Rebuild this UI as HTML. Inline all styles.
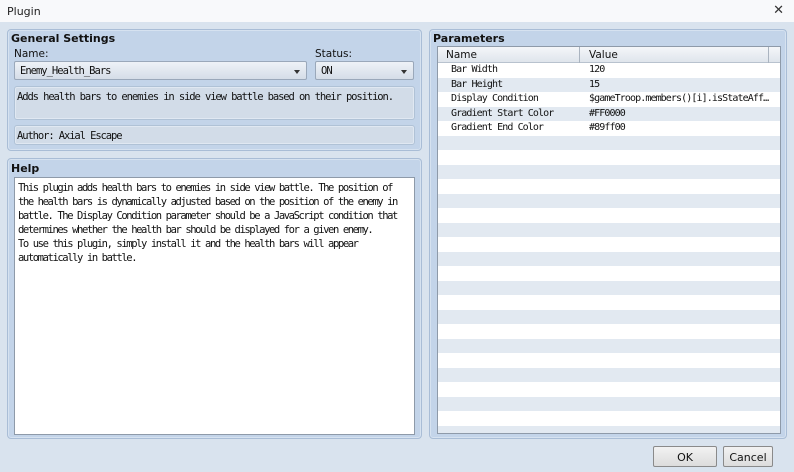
<!DOCTYPE html>
<html><head><style>
*{margin:0;padding:0;box-sizing:border-box}
body{width:794px;height:472px;overflow:hidden;background:#d9e3ee;font-family:"DejaVu Sans","Liberation Sans",sans-serif;position:relative}
.a{position:absolute}
.title{left:0;top:0;width:794px;height:22px;background:#f8f9fb;font-size:11px;color:#222;padding:5px 0 0 7px}
.x{right:10px;top:3px;font-size:13px;color:#333}
.panel{background:#c3d4e9;border:1px solid #a9bdd6;border-radius:4px;box-shadow:inset 0 0 0 1px #d6e2f0}
.h{font-weight:bold;font-size:11px;color:#111}
.lbl{font-size:10.5px;color:#111}
.dd{background:linear-gradient(#eef2f7,#d5dde8);border:1px solid #9aa8ba;border-radius:2px;font-family:"DejaVu Sans Mono",monospace;font-size:10.5px;letter-spacing:-1px;padding:3px 0 0 5px;color:#111}
.dd:after{content:"";position:absolute;right:6px;top:8px;border:3px solid transparent;border-top:4px solid #333}
.box{background:#d2dce8;border:1px solid #b0c2d6;border-radius:3px;box-shadow:inset 0 0 0 1px #e0e8f2;font-family:"DejaVu Sans Mono",monospace;font-size:10.5px;letter-spacing:-1.1px;padding:4px 0 0 2px;color:#111}
.help{background:#fff;border:1px solid #8e9aa9;font-family:"DejaVu Sans Mono",monospace;font-size:10.5px;letter-spacing:-1.4px;line-height:14px;padding:3px 0 0 3px;color:#111;white-space:pre}
.tbl{background:#fff;border:1px solid #8e9aa9;overflow:hidden}
.row{height:14.5px;font-family:"DejaVu Sans Mono",monospace;font-size:10px;letter-spacing:-0.9px;color:#111;position:relative}
.row:nth-child(even){background:#e2e9f1}
.row span{position:absolute;top:1px}
.btn{background:linear-gradient(#f2f2f2,#dcdcdc);border:1px solid #8a8a8a;border-radius:2px;font-size:11px;text-align:center;padding-top:4px;color:#111}
</style></head><body>
<div class="a title">Plugin</div>
<div class="a x">✕</div>

<div class="a panel" style="left:7px;top:29px;width:415px;height:122px"></div>
<div class="a h" style="left:11px;top:32px">General Settings</div>
<div class="a lbl" style="left:14px;top:48px">Name:</div>
<div class="a lbl" style="left:315px;top:48px">Status:</div>
<div class="a dd" style="left:14px;top:61px;width:293px;height:19px">Enemy_Health_Bars</div>
<div class="a dd" style="left:315px;top:61px;width:99px;height:19px">ON</div>
<div class="a box" style="left:14px;top:86px;width:401px;height:34px">Adds health bars to enemies in side view battle based on their position.</div>
<div class="a box" style="left:14px;top:125px;width:401px;height:20px">Author: Axial Escape</div>

<div class="a panel" style="left:7px;top:158px;width:415px;height:281px"></div>
<div class="a h" style="left:11px;top:162px">Help</div>
<div class="a help" style="left:14px;top:177px;width:401px;height:258px">This plugin adds health bars to enemies in side view battle. The position of
the health bars is dynamically adjusted based on the position of the enemy in
battle. The Display Condition parameter should be a JavaScript condition that
determines whether the health bar should be displayed for a given enemy.
To use this plugin, simply install it and the health bars will appear
automatically in battle.</div>

<div class="a panel" style="left:429px;top:29px;width:358px;height:410px"></div>
<div class="a h" style="left:433px;top:32px">Parameters</div>
<div class="a tbl" style="left:437px;top:46px;width:344px;height:388px">
<div style="height:16px;background:linear-gradient(#f4f6f9,#dfe5ec);border-bottom:1px solid #b8c2ce;position:relative;font-size:10.5px;color:#111">
<span class="a" style="left:8px;top:2px">Name</span>
<div class="a" style="left:141px;top:0;width:1px;height:16px;background:#aab4c0"></div>
<span class="a" style="left:151px;top:2px">Value</span>
<div class="a" style="left:330px;top:0;width:1px;height:16px;background:#aab4c0"></div>
</div>
<div>
<div class="row"><span style="left:13px">Bar Width</span><span style="left:151px">120</span></div>
<div class="row"><span style="left:13px">Bar Height</span><span style="left:151px">15</span></div>
<div class="row"><span style="left:13px">Display Condition</span><span style="left:151px">$gameTroop.members()[i].isStateAff…</span></div>
<div class="row"><span style="left:13px">Gradient Start Color</span><span style="left:151px">#FF0000</span></div>
<div class="row"><span style="left:13px">Gradient End Color</span><span style="left:151px">#89ff00</span></div>
<div class="row"></div><div class="row"></div><div class="row"></div><div class="row"></div><div class="row"></div>
<div class="row"></div><div class="row"></div><div class="row"></div><div class="row"></div><div class="row"></div>
<div class="row"></div><div class="row"></div><div class="row"></div><div class="row"></div><div class="row"></div>
<div class="row"></div><div class="row"></div><div class="row"></div><div class="row"></div><div class="row"></div>
<div class="row"></div>
</div>
</div>

<div class="a btn" style="left:653px;top:446px;width:64px;height:21px">OK</div>
<div class="a btn" style="left:723px;top:446px;width:50px;height:21px">Cancel</div>
</body></html>
